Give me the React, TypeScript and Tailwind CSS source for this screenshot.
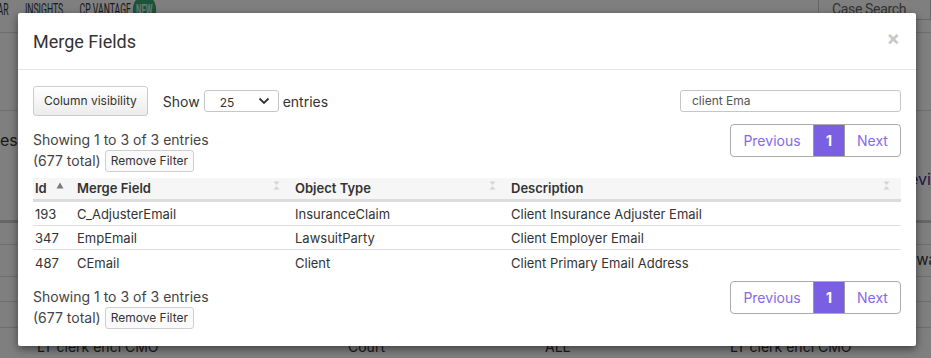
import React from 'react';

type Row = { id: number; field: string; type: string; desc: string };

const rows: Row[] = [
  { id: 193, field: 'C_AdjusterEmail', type: 'InsuranceClaim', desc: 'Client Insurance Adjuster Email' },
  { id: 347, field: 'EmpEmail', type: 'LawsuitParty', desc: 'Client Employer Email' },
  { id: 487, field: 'CEmail', type: 'Client', desc: 'Client Primary Email Address' },
];

const SortBoth = () => (
  <svg width="7" height="9" viewBox="0 0 7 9" className="shrink-0">
    <path d="M0.5 0.5 H6.5 L3.5 4 Z" fill="#d4d4d4" />
    <path d="M0.5 8.5 H6.5 L3.5 5 Z" fill="#d4d4d4" />
  </svg>
);

const SortUp = () => (
  <svg width="8" height="7" viewBox="0 0 8 7" className="shrink-0">
    <path d="M0.5 6.5 L4 0.5 L7.5 6.5 Z" fill="#7a7a7a" />
  </svg>
);

const Pager = () => (
  <div className="flex h-[33px] border border-[#ababab] rounded-[4px] overflow-hidden text-[14px]">
    <div className="w-[82px] flex items-center justify-center text-[#8569ea]">Previous</div>
    <div className="w-[32px] flex items-center justify-center bg-[#7b5fe3] text-white font-bold border-x border-[#9a9a9a]">1</div>
    <div className="w-[55px] flex items-center justify-center text-[#8569ea]">Next</div>
  </div>
);

const Info = () => (
  <div className="pt-[6px] text-[14px] leading-[20px] text-[#444]">
    <div>Showing 1 to 3 of 3 entries</div>
    <div className="flex items-center gap-[4px]">
      <span>(677 total)</span>
      <button className="h-[22px] px-[5px] border border-[#cfcfcf] rounded-[3px] bg-[#fafafa] text-[12px] text-[#333] leading-none">
        Remove Filter
      </button>
    </div>
  </div>
);

export default function App() {
  return (
    <div className="relative w-[931px] h-[358px] overflow-hidden bg-white" style={{ fontFamily: 'Inter, "Noto Sans", sans-serif' }}>
      {/* page behind the dialog */}
      <div className="text-[#333]">
        <div className="h-[33px] border-b border-[#ddd] flex items-start justify-between" style={{ fontFamily: 'Roboto, sans-serif' }}>
          <div className="-ml-[8px] -mt-[3px] flex items-center gap-[32px] text-[17px] scale-x-[0.51] origin-left whitespace-nowrap">
            <span>DAR</span>
            <span>INSIGHTS</span>
            <span className="flex items-center gap-[3px]">
              CP VANTAGE
              <span className="h-[22px] px-[7px] rounded-full bg-[#3aa776] text-[#d8f0e3] text-[15px] leading-[22px] font-bold">NEW</span>
            </span>
          </div>
          <div className="w-[113px] h-[20px] border border-[#ccc] border-t-0 pl-[13px] text-[14px] text-[#666] leading-[18px] tracking-tight whitespace-nowrap">
            Case Search
          </div>
        </div>
        <div className="h-[78px] border-b border-[#ddd]" />
        <div className="h-[58px] flex items-center text-[16px]">
          <span>es</span>
        </div>
        <div className="h-[20px] pl-[893px] text-[16px] text-[#3b2f8f] whitespace-nowrap -mt-[2px]">
          Previ
        </div>
        <div className="h-[36px] border-b-[3px] border-[#ccc]" />
        <div className="h-[22px] border-b border-[#ddd]" />
        <div className="h-[32px] border-b border-[#ddd] flex justify-end items-center text-[15px]">
          <span className="-mr-[6px]">Forwa</span>
        </div>
        <div className="h-[25px] border-b border-[#ddd]" />
        <div className="h-[26px] border-b border-[#ddd]" />
        <div className="h-[24px] text-[14px] relative">
          <span className="absolute left-[37px] top-[8px]">LT clerk encl CMO</span>
          <span className="absolute left-[348px] top-[8px]">Court</span>
          <span className="absolute left-[545px] top-[8px]">ALL</span>
          <span className="absolute left-[730px] top-[8px]">LT clerk encl CMO</span>
        </div>
      </div>

      {/* backdrop */}
      <div className="absolute inset-0 bg-black/50" />

      {/* dialog */}
      <div className="absolute left-[18px] top-[13px] w-[898px] bg-white rounded-[2px] shadow-[0_3px_9px_rgba(0,0,0,0.5)]">
        <div className="h-[57px] px-[15px] flex items-center justify-between border-b border-[#e5e5e5]">
          <h4 className="text-[18px] text-[#333]" style={{ fontFamily: 'Roboto, sans-serif' }}>Merge Fields</h4>
          <span className="text-[20px] font-bold text-[#c8c8c8] leading-none mr-[1px] -mt-[6px]">×</span>
        </div>

        <div className="pt-[16px] px-[15px] pb-[17px]">
          <div className="flex items-center justify-between">
            <div className="flex items-center">
              <button className="h-[30px] px-[10px] border border-[#cbcbcb] rounded-[3px] bg-gradient-to-b from-white to-[#ececec] text-[12px] text-[#333]">
                Column visibility
              </button>
              <span className="ml-[15px] text-[14px] text-[#333]">Show</span>
              <div className="ml-[4px] w-[75px] h-[22px] border border-[#c6c6c6] rounded-[3px] flex items-center justify-between pl-[15px] pr-[8px] text-[12px] text-[#333]">
                <span className="mt-[3px]">25</span>
                <svg width="12" height="8" viewBox="0 0 12 8">
                  <path d="M1.5 1.5 L6 6 L10.5 1.5" fill="none" stroke="#333" strokeWidth="1.8" />
                </svg>
              </div>
              <span className="ml-[4px] text-[14px] text-[#333]">entries</span>
            </div>
            <div className="w-[221px] h-[22px] border border-[#c6c6c6] rounded-[3px] pl-[11px] flex items-center text-[12px] text-[#555]">
              client Ema
            </div>
          </div>

          <div className="mt-[8px] flex items-start justify-between">
            <Info />
            <Pager />
          </div>

          <div className="mt-[6px] text-[13px] text-[#333]">
            <div className="flex h-[24px] bg-[#f6f6f6] border-b-[3px] border-[#dcdcdc] font-semibold">
              <div className="w-[40px] pl-[2px] pr-[9px] flex items-center justify-between">
                <span>Id</span>
                <span className="-mt-[6px]"><SortUp /></span>
              </div>
              <div className="w-[218px] pl-[4px] pr-[11px] flex items-center justify-between">
                <span>Merge Field</span>
                <span className="-mt-[6px]"><SortBoth /></span>
              </div>
              <div className="w-[216px] pl-[4px] pr-[11px] flex items-center justify-between">
                <span>Object Type</span>
                <span className="-mt-[6px]"><SortBoth /></span>
              </div>
              <div className="flex-1 pl-[4px] pr-[11px] flex items-center justify-between">
                <span>Description</span>
                <span className="-mt-[6px]"><SortBoth /></span>
              </div>
            </div>
            {rows.map((r, i) => (
              <div key={r.id} className={`flex h-[24px] items-center pt-[3px] ${i < rows.length - 1 ? 'border-b border-[#dedede]' : ''}`}>
                <div className="w-[40px] pl-[2px]">{r.id}</div>
                <div className="w-[218px] pl-[4px]">{r.field}</div>
                <div className="w-[216px] pl-[4px]">{r.type}</div>
                <div className="flex-1 pl-[4px]">{r.desc}</div>
              </div>
            ))}
          </div>

          <div className="mt-[7px] flex items-start justify-between">
            <Info />
            <Pager />
          </div>
        </div>
      </div>
    </div>
  );
}
